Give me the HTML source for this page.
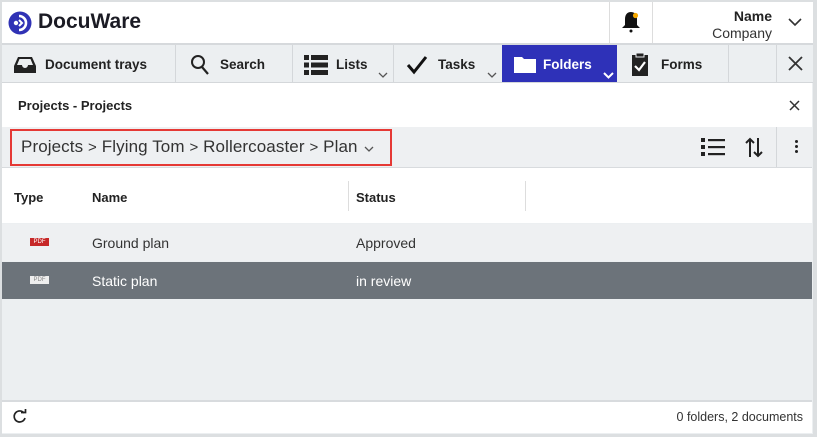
<!DOCTYPE html>
<html><head><meta charset="utf-8"><style>
*{margin:0;padding:0;box-sizing:border-box}
body{width:817px;height:437px;background:#dcdfe1;font-family:"Liberation Sans",sans-serif;position:relative;overflow:hidden;color:#222}
.a{position:absolute}
.b{font-weight:bold}
</style></head><body>
<div class="a" style="left:2px;top:2px;width:811px;height:432px;background:#eceff1"></div>
<div class="a" style="left:2px;top:2px;width:811px;height:41px;background:#fff"></div>
<svg class="a" style="left:8px;top:11px" width="24" height="24" viewBox="0 0 24 24"><circle cx="12" cy="12" r="11.5" fill="#3032b5"/><path d="M11 5a7 7 0 1 1 0 14" stroke="#fff" stroke-width="2.6" fill="none"/><circle cx="8" cy="12" r="2.2" fill="#fff"/><path d="M11 9l3 3-3 3" stroke="#fff" stroke-width="2" fill="none"/></svg>
<div class="a b" style="left:38px;top:10px;font-size:21px;color:#1b1b24">DocuWare</div>
<div class="a" style="left:609px;top:2px;width:1px;height:41px;background:#ddd"></div>
<div class="a" style="left:652px;top:2px;width:1px;height:41px;background:#ddd"></div>
<svg class="a" style="left:620px;top:9px" width="22" height="26" viewBox="0 0 22 26"><path d="M11 3c-4 0-6 3-6 7v6l-3 3h18l-3-3v-6c0-4-2-7-6-7z" fill="#111"/><circle cx="11" cy="22" r="1.5" fill="#111"/><circle cx="15.5" cy="6.5" r="2.6" fill="#f5a800"/></svg>
<div class="a b" style="left:660px;top:8px;width:112px;text-align:right;font-size:14px;color:#222">Name</div>
<div class="a" style="left:660px;top:25px;width:112px;text-align:right;font-size:14px;color:#333">Company</div>
<svg class="a" style="left:788px;top:17px" width="14" height="10"><path d="M1 2l6 6 6-6" stroke="#333" stroke-width="1.6" fill="none"/></svg>
<div class="a" style="left:2px;top:43px;width:811px;height:2px;background:#d6d9dc"></div>
<div class="a" style="left:2px;top:45px;width:811px;height:38px;background:#eceff1"></div>
<div class="a" style="left:2px;top:82px;width:811px;height:1px;background:#d4d7da"></div>
<div class="a" style="left:502px;top:45px;width:115px;height:37px;background:#2e31b8"></div>
<div class="a" style="left:175px;top:45px;width:1px;height:37px;background:#d4d7da"></div>
<div class="a" style="left:292px;top:45px;width:1px;height:37px;background:#d4d7da"></div>
<div class="a" style="left:393px;top:45px;width:1px;height:37px;background:#d4d7da"></div>
<div class="a" style="left:728px;top:45px;width:1px;height:37px;background:#d4d7da"></div>
<div class="a" style="left:776px;top:45px;width:1px;height:37px;background:#d4d7da"></div>
<svg class="a" style="left:13px;top:55px" width="24" height="20" viewBox="0 0 24 20"><path d="M5 2h14l4 9v7H1v-7z" fill="#222"/><path d="M4 10l2.5-6h11L20 10h-5a3 3 0 0 1-6 0z" fill="#eceff1"/></svg>
<div class="a b" style="left:45px;top:57px;font-size:13.5px">Document trays</div>
<svg class="a" style="left:190px;top:54px" width="20" height="22"><circle cx="8" cy="8" r="6" stroke="#222" stroke-width="2" fill="none"/><path d="M12 13l6 7" stroke="#222" stroke-width="2.2"/></svg>
<div class="a b" style="left:220px;top:57px;font-size:13.5px">Search</div>
<svg class="a" style="left:304px;top:54px" width="24" height="22"><g fill="#222"><rect x="0" y="1" width="5" height="5"/><rect x="7" y="1" width="17" height="5"/><rect x="0" y="8.5" width="5" height="5"/><rect x="7" y="8.5" width="17" height="5"/><rect x="0" y="16" width="5" height="5"/><rect x="7" y="16" width="17" height="5"/></g></svg>
<div class="a b" style="left:336px;top:57px;font-size:13.5px">Lists</div>
<svg class="a" style="left:378px;top:72px" width="10" height="7"><path d="M1 1l4 4 4-4" stroke="#555" stroke-width="1.3" fill="none"/></svg>
<svg class="a" style="left:406px;top:55px" width="22" height="20"><path d="M2 10l6 7L20 2" stroke="#111" stroke-width="3" fill="none"/></svg>
<div class="a b" style="left:438px;top:57px;font-size:13.5px">Tasks</div>
<svg class="a" style="left:487px;top:72px" width="10" height="7"><path d="M1 1l4 4 4-4" stroke="#555" stroke-width="1.3" fill="none"/></svg>
<svg class="a" style="left:514px;top:56px" width="22" height="17"><path d="M0 1h8l2 2h12v14H0z" fill="#fff"/></svg>
<div class="a b" style="left:543px;top:57px;font-size:13.5px;color:#fff">Folders</div>
<svg class="a" style="left:603px;top:72px" width="11" height="7"><path d="M1 1l4.5 4.5L10 1" stroke="#fff" stroke-width="2" fill="none"/></svg>
<svg class="a" style="left:631px;top:52px" width="18" height="25"><rect x="1" y="3" width="16" height="21" fill="#222"/><rect x="5" y="1" width="8" height="4" fill="#222" stroke="#eceff1" stroke-width="1"/><path d="M4 14l4 4 6-8" stroke="#fff" stroke-width="2.2" fill="none"/></svg>
<div class="a b" style="left:661px;top:57px;font-size:13.5px">Forms</div>
<svg class="a" style="left:788px;top:56px" width="15" height="15"><path d="M1 1l13 13M14 1L1 14" stroke="#333" stroke-width="1.8"/></svg>
<div class="a" style="left:2px;top:83px;width:810px;height:44px;background:#fff"></div>
<div class="a b" style="left:18px;top:98px;font-size:13px">Projects - Projects</div>
<svg class="a" style="left:789px;top:100px" width="11" height="11"><path d="M1 1l9 9M10 1l-9 9" stroke="#333" stroke-width="1.5"/></svg>
<div class="a" style="left:2px;top:127px;width:810px;height:41px;background:#eef0f2;border-bottom:1px solid #d8dbde"></div>
<div class="a" style="left:10px;top:129px;width:382px;height:37px;border:2px solid #e53935"></div>
<div class="a" style="left:21px;top:137px;font-size:17px;color:#333;white-space:nowrap;letter-spacing:0.1px">Projects <span style="font-size:15px">&gt;</span> Flying Tom <span style="font-size:15px">&gt;</span> Rollercoaster <span style="font-size:15px">&gt;</span> Plan</div>
<svg class="a" style="left:364px;top:146px" width="10" height="7"><path d="M1 1l4 4 4-4" stroke="#555" stroke-width="1.3" fill="none"/></svg>
<svg class="a" style="left:701px;top:137px" width="24" height="20"><g fill="#222"><rect x="0" y="1" width="4" height="4"/><rect x="7" y="2" width="17" height="2.2"/><rect x="0" y="8" width="4" height="4"/><rect x="7" y="9" width="17" height="2.2"/><rect x="0" y="15" width="4" height="4"/><rect x="7" y="16" width="17" height="2.2"/></g></svg>
<svg class="a" style="left:745px;top:137px" width="18" height="21"><path d="M5 20V2M1 6l4-4 4 4M13 1v18M9 15l4 4 4-4" stroke="#222" stroke-width="2" fill="none"/></svg>
<div class="a" style="left:776px;top:127px;width:1px;height:40px;background:#d4d7da"></div>
<div class="a" style="left:795px;top:140px;width:3px;height:3px;background:#222;box-shadow:0 5px #222,0 10px #222;border-radius:50%"></div>
<div class="a" style="left:2px;top:168px;width:810px;height:55px;background:#fff"></div>
<div class="a b" style="left:14px;top:190px;font-size:13px">Type</div>
<div class="a b" style="left:92px;top:190px;font-size:13px">Name</div>
<div class="a" style="left:348px;top:181px;width:1px;height:30px;background:#ddd"></div>
<div class="a b" style="left:356px;top:190px;font-size:13px">Status</div>
<div class="a" style="left:525px;top:181px;width:1px;height:30px;background:#ddd"></div>
<div class="a" style="left:2px;top:224px;width:810px;height:37px;background:#eef0f2"></div>
<div class="a" style="left:30px;top:238px;width:19px;height:8px;background:#c62828;font-size:6px;color:#fff;line-height:8px;text-align:center">PDF</div>
<div class="a" style="left:92px;top:235px;font-size:14px;color:#333">Ground plan</div>
<div class="a" style="left:356px;top:235px;font-size:14px;color:#333">Approved</div>
<div class="a" style="left:2px;top:262px;width:810px;height:37px;background:#6c737a"></div>
<div class="a" style="left:30px;top:276px;width:19px;height:8px;background:#eee;font-size:6px;color:#888;line-height:8px;text-align:center">PDF</div>
<div class="a" style="left:92px;top:273px;font-size:14px;color:#fff">Static plan</div>
<div class="a" style="left:356px;top:273px;font-size:14px;color:#fff">in review</div>
<div class="a" style="left:2px;top:400px;width:810px;height:2px;background:#d8dbde"></div>
<div class="a" style="left:2px;top:402px;width:810px;height:31px;background:#fff"></div>
<svg class="a" style="left:12px;top:409px" width="15" height="15"><path d="M12 4A5.5 5.5 0 1 0 13 9" stroke="#222" stroke-width="1.7" fill="none"/><path d="M9 3.5h4.5V0" stroke="#222" stroke-width="1.7" fill="none"/></svg>
<div class="a" style="left:600px;top:410px;width:203px;text-align:right;font-size:12.5px;color:#333">0 folders, 2 documents</div>
</body></html>
